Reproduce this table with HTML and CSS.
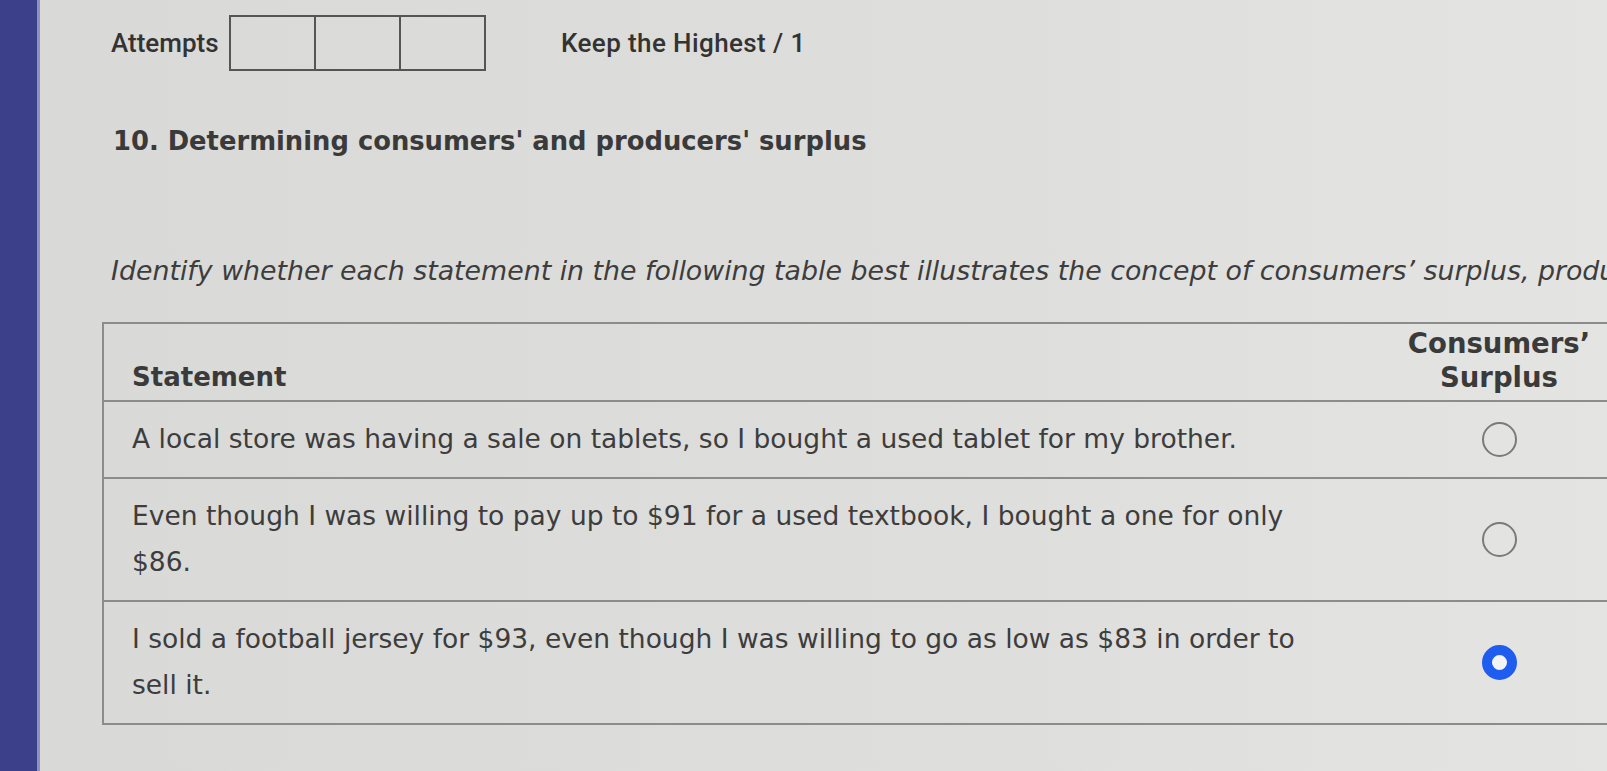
FILE: index.html
```html
<!DOCTYPE html>
<html lang="en">
<head>
<meta charset="utf-8">
<title>Determining consumers' and producers' surplus</title>
<link rel="stylesheet" href="styles.css">
</head>
<body>
<div class="page">
  <aside class="sidebar"></aside>
  <main class="main">
    <div class="attempts-row">
      <span class="attempts-label">Attempts</span>
      <div class="attempt-boxes">
        <span class="box"></span><span class="box"></span><span class="box"></span>
      </div>
      <span class="keep">Keep the Highest / 1</span>
    </div>
    <h1 class="title">10. Determining consumers' and producers' surplus</h1>
    <p class="instructions">Identify whether each statement in the following table best illustrates the concept of consumers’ surplus, producers’ surplus, or neither.</p>
    <div class="table">
      <div class="cell head stmt">Statement</div>
      <div class="cell head choice">Consumers’<br>Surplus</div>
      <div class="cell head choice">Producers’<br>Surplus</div>

      <div class="cell stmt">A local store was having a sale on tablets, so I bought a used tablet for my brother.</div>
      <div class="cell choice"><span class="radio"></span></div>
      <div class="cell choice"><span class="radio"></span></div>

      <div class="cell stmt">Even though I was willing to pay up to $91 for a used textbook, I bought a one for only $86.</div>
      <div class="cell choice"><span class="radio"></span></div>
      <div class="cell choice"><span class="radio"></span></div>

      <div class="cell stmt">I sold a football jersey for $93, even though I was willing to go as low as $83 in order to sell it.</div>
      <div class="cell choice"><span class="radio checked"></span></div>
      <div class="cell choice"><span class="radio"></span></div>
    </div>
  </main>
</div>
</body>
</html>
```
FILE: styles.css
```css
html, body {
  margin: 0;
  padding: 0;
  width: 1607px;
  height: 771px;
  overflow: hidden;
  background: #dcdcda;
}

.page {
  display: flex;
  height: 771px;
}

.sidebar {
  flex: 0 0 37px;
  background: #3c3f8a;
  border-right: 3px solid #8f91c0;
}

.main {
  flex: 1;
  padding-left: 71px;
  background: linear-gradient(90deg, #d9d9d7 0%, #dededc 60%, #e4e4e2 100%);
  color: #3b3b3b;
  min-width: 0;
  overflow: hidden;
}

.attempts-row {
  display: flex;
  align-items: center;
  height: 56px;
  margin-top: 15px;
  font-family: Roboto, "Liberation Sans", sans-serif;
  font-weight: 500;
  font-size: 26px;
  color: #333;
}

.attempts-label {
  width: 118px;
}

.attempt-boxes {
  display: flex;
  height: 56px;
  border: 2px solid #555;
  box-sizing: border-box;
}

.box {
  width: 83px;
  height: 100%;
  border-right: 2px solid #555;
}

.box:last-child {
  border-right: none;
}

.keep {
  margin-left: 75px;
  letter-spacing: 0.4px;
}

.title {
  margin: 52px 0 0 2px;
  font-family: "DejaVu Sans", Verdana, sans-serif;
  font-weight: bold;
  font-size: 25.8px;
  line-height: 36px;
  color: #3a3a3a;
}

.instructions {
  margin: 97px 0 0 0;
  font-family: "DejaVu Sans", Verdana, sans-serif;
  font-style: italic;
  font-size: 26.8px;
  line-height: 30px;
  white-space: nowrap;
  color: #3d3d3d;
}

.table {
  display: grid;
  grid-template-columns: 1274px 242px 242px;
  margin: 36px 0 0 -9px;
  border-top: 2px solid #8c8c8c;
  border-left: 2px solid #8c8c8c;
  font-family: "DejaVu Sans", Verdana, sans-serif;
  font-size: 26.5px;
  color: #3d3d3d;
}

.cell {
  border-bottom: 2px solid #8c8c8c;
  padding: 14px 28px 15px;
  line-height: 46px;
}

.cell.stmt {
  padding-right: 56px;
}

.cell.choice {
  display: flex;
  align-items: center;
  justify-content: center;
  padding: 0;
}

.cell.head {
  font-weight: bold;
  font-size: 26px;
  line-height: 34px;
  padding-top: 2px;
  padding-bottom: 6px;
  display: flex;
  align-items: flex-end;
  color: #3a3a3a;
}

.cell.head.choice {
  justify-content: center;
  text-align: center;
  font-size: 27.5px;
}

.radio {
  width: 31px;
  height: 31px;
  border: 2px solid #7a7a7a;
  border-radius: 50%;
  box-sizing: content-box;
}

.radio.checked {
  width: 15px;
  height: 15px;
  border: 10px solid #1f5cf0;
  background: #f4f4f4;
}
```
